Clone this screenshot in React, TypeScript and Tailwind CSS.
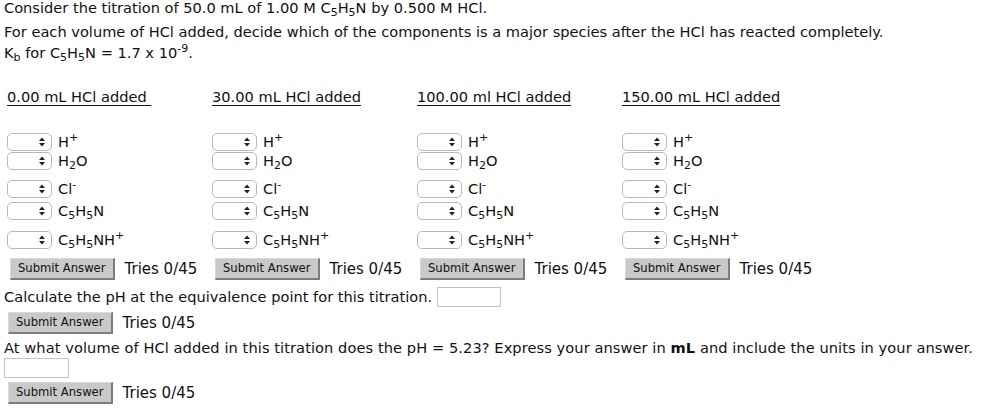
import React from "react";

const Sub = ({ children }: { children: React.ReactNode }) => (
  <sub className="text-[11px] relative top-[3px] align-baseline leading-none">{children}</sub>
);
const Sup = ({ children }: { children: React.ReactNode }) => (
  <sup className="text-[11px] relative -top-[6px] align-baseline leading-none">{children}</sup>
);

const Select = () => (
  <div className="w-[45px] h-[18px] rounded-[5px] border border-[#b9b9b9] bg-white flex items-center justify-end pr-[6px] shrink-0">
    <svg width="6" height="10" viewBox="0 0 6 10">
      <polygon points="3,0.5 6,4 0,4" fill="#222" />
      <polygon points="0,6 6,6 3,9.5" fill="#222" />
    </svg>
  </div>
);

const Button = () => (
  <button className="h-[22px] px-[7px] bg-[#c9c9c9] border border-t-[#d9d9d9] border-l-[#d9d9d9] border-r-[#7d7d7d] border-b-[#7d7d7d] border-r-2 border-b-2 text-[11.6px] leading-none text-[#111] font-['DejaVu_Sans']">
    Submit Answer
  </button>
);

const Tries = () => <span className="text-[15px]">Tries 0/45</span>;

const Row = ({ children, mt }: { children: React.ReactNode; mt: string }) => (
  <div className={`flex items-center gap-[6px] h-[18px] ${mt}`}>
    <Select />
    <span className="leading-none">{children}</span>
  </div>
);

const columns = ["0.00 mL HCl added\u00a0", "30.00 mL HCl added", "100.00 ml HCl added", "150.00 mL HCl added"];

export default function App() {
  return (
    <div className="w-[1007px] h-[409px] overflow-hidden bg-white text-[#111] font-['DejaVu_Sans',_sans-serif] text-[14.6px] leading-[20px] pl-[4px]">
      <p className="-mt-[2px]">
        Consider the titration of 50.0 mL of 1.00 M C<Sub>5</Sub>H<Sub>5</Sub>N by 0.500 M HCl.
      </p>
      <p className="mt-[4px]">
        For each volume of HCl added, decide which of the components is a major species after the HCl has reacted completely.
      </p>
      <p className="mt-[1px]">
        K<Sub>b</Sub> for C<Sub>5</Sub>H<Sub>5</Sub>N = 1.7 x 10<Sup>-9</Sup>.
      </p>
      <div className="flex mt-[24px] pl-[3px]">
        {columns.map((c, i) => (
          <div key={i} className="w-[205px] shrink-0 flex flex-col">
            <span className="underline underline-offset-[3px] whitespace-pre h-[20px]">{c}</span>
            <Row mt="mt-[26px]">
              H<Sup>+</Sup>
            </Row>
            <Row mt="mt-[1px]">
              H<Sub>2</Sub>O
            </Row>
            <Row mt="mt-[10px]">
              Cl<Sup>-</Sup>
            </Row>
            <Row mt="mt-[4px]">
              C<Sub>5</Sub>H<Sub>5</Sub>N
            </Row>
            <Row mt="mt-[11px]">
              C<Sub>5</Sub>H<Sub>5</Sub>NH<Sup>+</Sup>
            </Row>
            <div className="flex items-center gap-[10px] mt-[9px] ml-[3px]">
              <Button />
              <Tries />
            </div>
          </div>
        ))}
      </div>
      <div className="flex items-center mt-[6px] h-[21px]">
        <span>Calculate the pH at the equivalence point for this titration.</span>
        <input className="ml-[5px] w-[64px] h-[20px] border border-[#c3c3c3] bg-white" />
      </div>
      <div className="flex items-center gap-[10px] mt-[5px] ml-[4px]">
        <Button />
        <Tries />
      </div>
      <p className="mt-[4px] tracking-[0.08px]">
        At what volume of HCl added in this titration does the pH = 5.23? Express your answer in <b>mL</b> and include the units in your answer.
      </p>
      <input className="block w-[65px] h-[20px] border border-[#c3c3c3] bg-white" />
      <div className="flex items-center gap-[10px] mt-[4px] ml-[4px]">
        <Button />
        <Tries />
      </div>
    </div>
  );
}
